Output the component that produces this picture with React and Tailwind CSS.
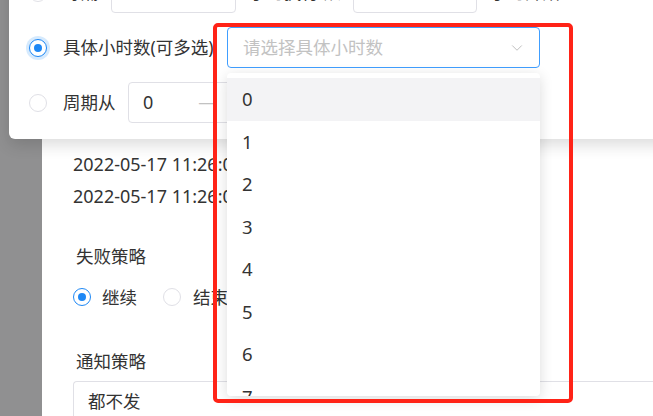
import { ChevronDown } from "lucide-react";

const hours = [0, 1, 2, 3, 4, 5, 6, 7];

const Radio = ({ checked, glow }) => (
  <span
    className={
      "flex h-[18px] w-[18px] shrink-0 items-center justify-center rounded-full border bg-white " +
      (checked ? "border-[#1e88f5] border-[1.5px]" : "border-[#e0e0e6]") +
      (glow ? " shadow-[0_0_0_3px_rgba(30,136,245,0.18)]" : "")
    }
  >
    {checked && <span className="h-[8px] w-[8px] rounded-full bg-[#1e88f5]" />}
  </span>
);

const Box = ({ className = "", children }) => (
  <div
    className={
      "flex h-[41px] items-center rounded-[4px] border border-[#e0e0e6] bg-white px-[14px] " +
      className
    }
  >
    {children}
  </div>
);

export default function App() {
  return (
    <div className="relative h-[416px] w-[653px] overflow-hidden bg-[#909091] font-['Noto_Sans','Noto_Sans_CJK_SC',sans-serif] text-[17.5px] text-[#333333]">
      <div className="flex h-full">
        <div className="w-[42px] shrink-0" />

        {/* drawer */}
        <div className="flex-1 bg-white pl-[31px] pt-[148px]">
          <div className="text-[18px] leading-8 whitespace-nowrap">
            <div>2022-05-17 11:26:00</div>
            <div>2022-05-17 11:26:00</div>
          </div>

          <div className="mt-8 pl-[3px] leading-6">失败策略</div>
          <div className="mt-[13px] flex h-8 items-center">
            <Radio checked />
            <span className="ml-[11px]">继续</span>
            <span className="ml-[26px]">
              <Radio />
            </span>
            <span className="ml-[12px]">结束</span>
          </div>

          <div className="mt-9 pl-[3px] leading-6">通知策略</div>
          <div className="mt-2 flex h-10 items-center rounded-l-[4px] border border-r-0 border-[#e0e0e6] pl-[14px]">
            都不发
          </div>
        </div>
      </div>

      {/* cron popover */}
      <div className="absolute left-[9px] right-[-20px] top-[-50px] flex flex-col gap-[14px] rounded-b-[6px] bg-white pb-[16px] pl-[20px] pt-[22px] shadow-[0_6px_16px_rgba(0,0,0,0.14)]">
        <div className="flex h-[41px] items-center whitespace-nowrap">
          <Radio />
          <span className="ml-[16px] w-[48px]">每隔</span>
          <Box className="w-[125px]" />
          <span className="w-[117px] pl-[13px]">小时执行 从</span>
          <Box className="w-[124px]" />
          <span className="pl-[13px]">小时开始</span>
        </div>

        <div className="flex h-[41px] items-center whitespace-nowrap">
          <Radio checked glow />
          <span className="ml-[16px] w-[164px]">具体小时数(可多选)</span>
          <div className="flex h-[41px] w-[313px] items-center justify-between rounded-[4px] border border-[#409eff] bg-white pl-[15px] pr-[13px]">
            <span className="text-[#c2c2c2]">请选择具体小时数</span>
            <ChevronDown size={18} strokeWidth={1.3} className="text-[#bdbdbd]" />
          </div>
        </div>

        <div className="flex h-[41px] items-center whitespace-nowrap">
          <Radio />
          <span className="ml-[16px] w-[65px]">周期从</span>
          <Box className="w-[180px] gap-[45px] text-[18px]">
            <span>0</span>
            <span className="text-[#c2c2c2]">—</span>
            <span>23</span>
          </Box>
        </div>
      </div>

      {/* hour select dropdown */}
      <div className="absolute left-[227px] top-[73px] h-[323px] w-[313px] overflow-hidden rounded-[4px] bg-white pt-[5px] shadow-[0_3px_14px_rgba(0,0,0,0.14)]">
        {hours.map((h) => (
          <div
            key={h}
            className={
              "flex h-[42.5px] items-center pl-[15px] text-[18.5px] " +
              (h === 0 ? "bg-[#f3f3f5]" : "")
            }
          >
            {h}
          </div>
        ))}
      </div>

      {/* annotation */}
      <div className="pointer-events-none absolute left-[213px] top-[23px] h-[380px] w-[360px] rounded-[5px] border-4 border-[#ff2317]" />
    </div>
  );
}
